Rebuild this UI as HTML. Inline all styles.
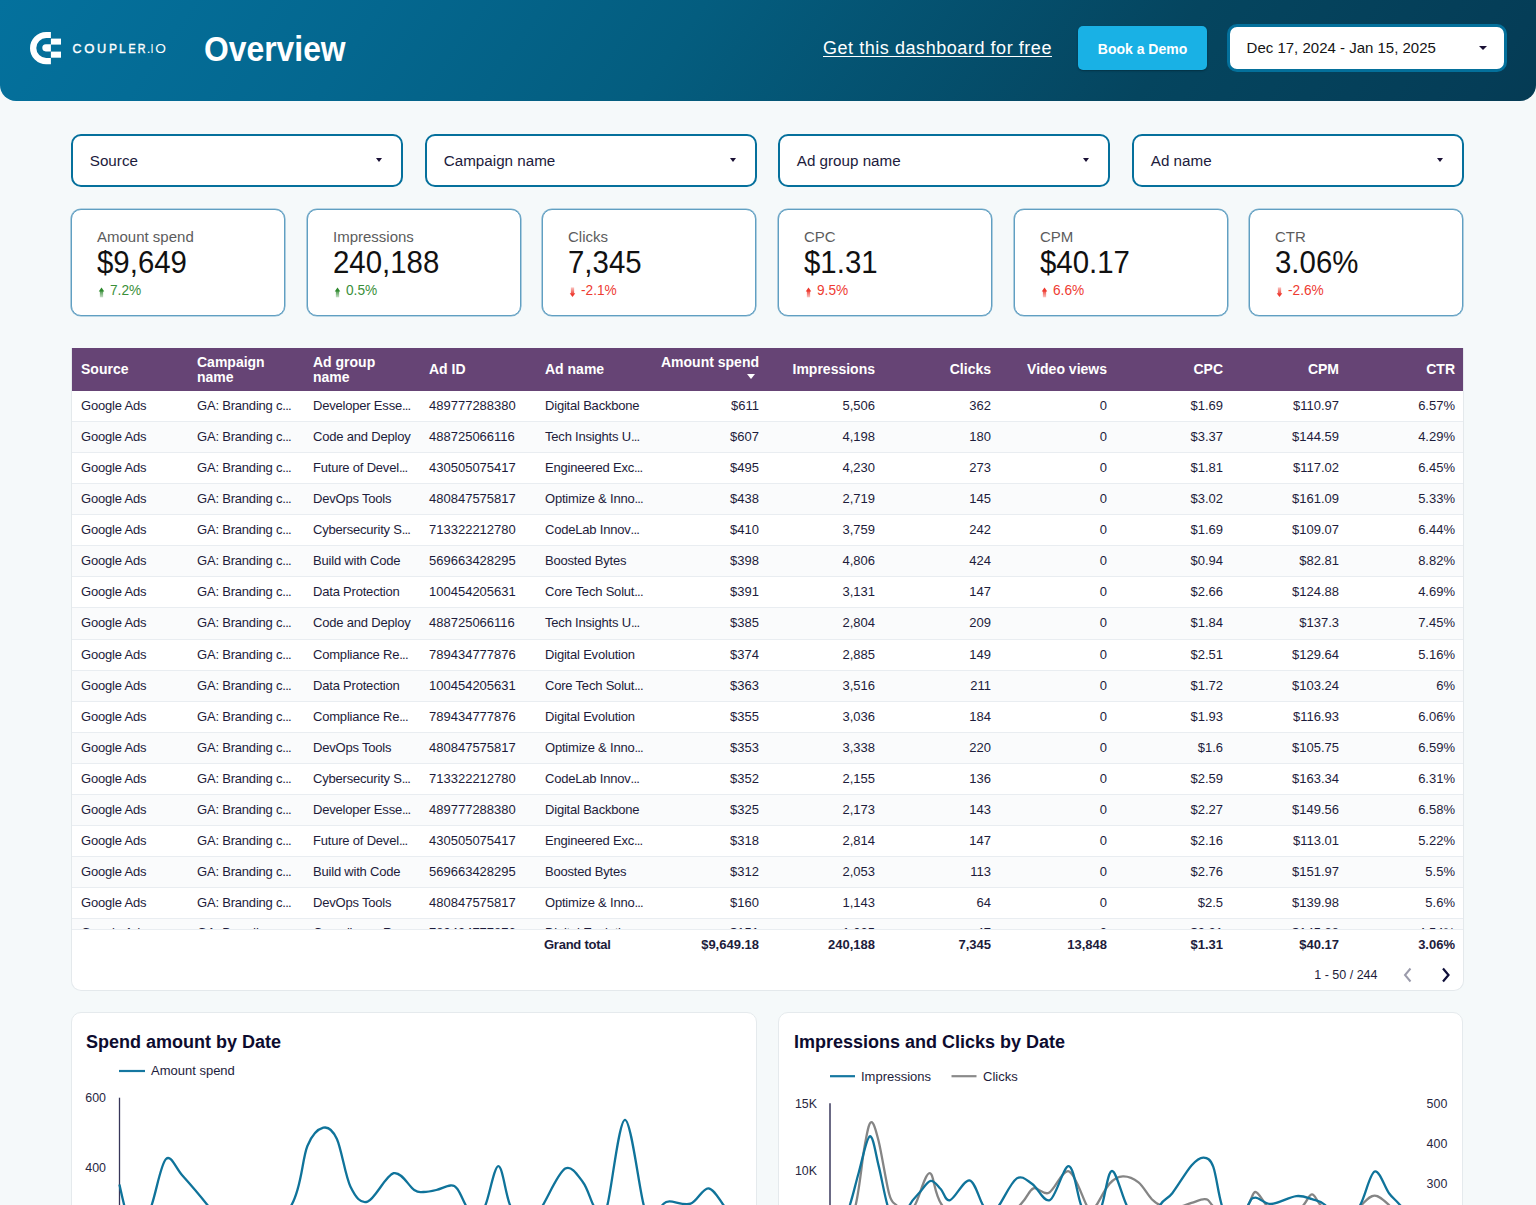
<!DOCTYPE html>
<html><head><meta charset="utf-8">
<style>
*{box-sizing:border-box;margin:0;padding:0}
html,body{width:1536px;height:1205px;overflow:hidden;background:#f5f9fa;font-family:"Liberation Sans",sans-serif}
.abs{position:absolute}
#hdr{position:absolute;left:0;top:0;width:1536px;height:101px;border-radius:0 0 16px 16px;background:linear-gradient(125deg,#04719d 0%,#04678f 24%,#045d7f 44%,#05455f 75%,#053d57 96%,#053b54 100%)}
.overview{position:absolute;left:204px;top:28.5px;color:#fff;font-size:34.5px;line-height:40px;font-weight:bold;transform:scaleX(0.923);transform-origin:0 0;white-space:nowrap}
.getlink{position:absolute;left:823px;top:37px;color:#fff;font-size:18px;line-height:22px;letter-spacing:0.55px;text-decoration:underline;text-underline-offset:2px;white-space:nowrap}
.demo{position:absolute;left:1078px;top:26px;width:129px;height:44px;border-radius:5px;background:#19b1e5;color:#fff;font-weight:bold;font-size:14px;text-align:center;line-height:47px;box-shadow:0 1px 2px rgba(0,0,0,.3)}
.date{position:absolute;left:1227px;top:24px;width:280px;height:48px;border-radius:10px;background:#fff;border:3px solid #04709b}
.date span{position:absolute;left:16.6px;top:12.4px;font-size:15px;line-height:17px;color:#141414;white-space:nowrap}
.tri{position:absolute;width:0;height:0;border-left:3.8px solid transparent;border-right:3.8px solid transparent;border-top:4.2px solid #1a1035}
.filter{position:absolute;top:134px;width:332px;height:53px;border:2.3px solid #05709c;border-radius:10px;background:#fff}
.filter span{position:absolute;left:16.8px;top:16px;font-size:15.2px;color:#1c1b3c}
.filter .tri{left:303px;top:22px}
.kpi{position:absolute;top:209px;width:214px;height:107px;border:1px solid #609fc2;box-shadow:0 0 0 0.6px #7fb1cd;border-radius:10px;background:#fff}
.kpi .l{position:absolute;left:25px;top:18px;font-size:15px;color:#5c5c5c}
.kpi .ar{position:absolute;left:26.3px;top:76.7px;transform:scaleX(0.9)}
.kpi .v{position:absolute;left:24.6px;top:34.3px;font-size:31.8px;color:#111;transform:scaleX(0.925);transform-origin:0 0;white-space:nowrap}
.kpi .d{position:absolute;left:38.4px;top:71.6px;font-size:14.9px;transform:scaleX(0.92);transform-origin:0 0;white-space:nowrap}
.up{color:#3a8f3a}.dn{color:#ee3b32}

#tbl{position:absolute;left:71px;top:348px;width:1393px;height:643px;background:#fff;border:1px solid #e4e9ec;border-top:none;border-radius:0 0 10px 10px;overflow:hidden;color:#1d1c3b}
#tbl .th{position:absolute;left:0;top:0;width:1391px;height:43px;background:#664475;color:#fff;font-weight:bold;font-size:14px}
#tbl .c{position:absolute;width:116px;padding:0 9px;white-space:nowrap}
#tbl .l{text-align:left}#tbl .r{text-align:right}
#tbl .th .c{top:12.7px;line-height:16px}
#tbl .th .two{top:6.8px;line-height:15.5px}
.stri{display:inline-block;width:0;height:0;border-left:4px solid transparent;border-right:4px solid transparent;border-top:5px solid #fff;margin-right:4px;vertical-align:3px}
#tbl .body{position:absolute;left:0;top:43px;width:1391px;height:537.8px;overflow:hidden;font-size:13px}
#tbl .row{position:absolute;left:0;width:1391px;height:31.07px;border-bottom:1px solid #e9edf1}
#tbl .row.alt{background:#fafbfc}
#tbl .row .c{top:0;line-height:30px}
#tbl .row.last .c{top:-0.8px}
#tbl .tot{position:absolute;left:0;top:580.8px;width:1391px;height:30px;font-size:13px;font-weight:bold;border-top:1px solid #e9edf1}
#tbl .tot .c{top:0px;line-height:30px}
#tbl .pag{position:absolute;left:1205px;top:618.5px;width:100.5px;text-align:right;font-size:12.5px;line-height:16px}

.card{position:absolute;top:1012px;height:260px;background:#fff;border:1px solid #e5eaed;border-radius:10px}
.ctitle{position:absolute;top:1031.75px;font-size:18px;font-weight:bold;line-height:20px;color:#0d0c2f;white-space:nowrap}
.leg{position:absolute;font-size:13px;line-height:16px;color:#1d1c3b;white-space:nowrap}
.ax{position:absolute;margin-top:0.4px;width:31px;font-size:12.4px;line-height:16px;color:#28273f;text-align:right;white-space:nowrap}
.ax.r{text-align:left;left:1426.6px!important;margin-top:0.8px}

#tbl i{font-style:normal;letter-spacing:-0.8px}
#tbl .row .t{letter-spacing:-0.2px}
</style></head>
<body>
<div id="hdr">
  <svg class="abs" style="left:0;top:0" width="70" height="80" viewBox="0 0 70 80"><path fill="#fff" fill-rule="evenodd" d="M50.9,32 H46.15 A16.15,16.15 0 0 0 46.15,64.3 H50.9 Z M50.9,38.1 H46.2 A9.9,9.9 0 0 0 46.2,57.9 H50.9 Z M50.9,44.3 H45.85 A3.55,3.55 0 0 0 45.85,51.4 H50.9 Z"/><rect x="50.9" y="38.6" width="10.1" height="6" fill="#fff"/><rect x="50.9" y="51.6" width="10.1" height="6.1" fill="#fff"/></svg>
  <svg class="abs" style="left:0;top:0" width="180" height="80" viewBox="0 0 180 80"><g font-family="Liberation Sans" font-size="13.4" fill="#fff"><text transform="translate(72.43,53) scale(0.93,1)" stroke="#fff" stroke-width="0.4">C</text><text transform="translate(84.3,53) scale(0.98,1)" stroke="#fff" stroke-width="0.4">O</text><text transform="translate(97.12,53) scale(0.95,1)" stroke="#fff" stroke-width="0.4">U</text><text transform="translate(108.98,53) scale(0.9,1)" stroke="#fff" stroke-width="0.4">P</text><text transform="translate(119.12,53) scale(0.9,1)" stroke="#fff" stroke-width="0.4">L</text><text transform="translate(128.4,53) scale(0.8,1)" stroke="#fff" stroke-width="0.4">E</text><text transform="translate(137.86,53) scale(0.8,1)" stroke="#fff" stroke-width="0.4">R</text><text transform="translate(146.67,53) scale(1,1)">.</text><text transform="translate(150.38,53) scale(0.8,1)">I</text><text transform="translate(155.36,53) scale(1.02,1)">O</text></g></svg>
  <div class="overview">Overview</div>
  <div class="getlink">Get this dashboard for free</div>
  <div class="demo">Book a Demo</div>
  <div class="date"><span>Dec 17, 2024 - Jan 15, 2025</span><div class="tri" style="left:249px;top:19.3px;border-left-width:4px;border-right-width:4px;border-top-width:4.5px"></div></div>
</div>

<div class="filter" style="left:71px"><span>Source</span><div class="tri"></div></div>
<div class="filter" style="left:425px"><span>Campaign name</span><div class="tri"></div></div>
<div class="filter" style="left:778px"><span>Ad group name</span><div class="tri"></div></div>
<div class="filter" style="left:1132px"><span>Ad name</span><div class="tri"></div></div>

<div class="kpi" style="left:71px"><div class="l">Amount spend</div><div class="v">$9,649</div><svg class="ar" width="7" height="11" viewBox="0 0 7 11"><defs><linearGradient id="gu" x1="0" y1="0" x2="0" y2="1"><stop offset="0" stop-color="#3a8f3a" stop-opacity="0.9"/><stop offset="1" stop-color="#3a8f3a" stop-opacity="0.3"/></linearGradient></defs><path d="M0.4,4.4 L3.5,0.6 L6.6,4.4 Z" fill="#2f8a2f"/><rect x="1.7" y="4" width="3.6" height="6.3" fill="url(#gu)"/></svg><div class="d up">7.2%</div></div>
<div class="kpi" style="left:307px"><div class="l">Impressions</div><div class="v">240,188</div><svg class="ar" width="7" height="11" viewBox="0 0 7 11"><defs><linearGradient id="gu2" x1="0" y1="0" x2="0" y2="1"><stop offset="0" stop-color="#3a8f3a" stop-opacity="0.9"/><stop offset="1" stop-color="#3a8f3a" stop-opacity="0.3"/></linearGradient></defs><path d="M0.4,4.4 L3.5,0.6 L6.6,4.4 Z" fill="#2f8a2f"/><rect x="1.7" y="4" width="3.6" height="6.3" fill="url(#gu2)"/></svg><div class="d up">0.5%</div></div>
<div class="kpi" style="left:542px"><div class="l">Clicks</div><div class="v">7,345</div><svg class="ar" width="7" height="11" viewBox="0 0 7 11"><defs><linearGradient id="rd" x1="0" y1="1" x2="0" y2="0"><stop offset="0" stop-color="#ee3a30" stop-opacity="0.9"/><stop offset="1" stop-color="#ee3a30" stop-opacity="0.3"/></linearGradient></defs><path d="M0.4,6.3 L3.5,10.1 L6.6,6.3 Z" fill="#ee3a30"/><rect x="1.7" y="0.4" width="3.6" height="6.3" fill="url(#rd)"/></svg><div class="d dn">-2.1%</div></div>
<div class="kpi" style="left:778px"><div class="l">CPC</div><div class="v">$1.31</div><svg class="ar" width="7" height="11" viewBox="0 0 7 11"><defs><linearGradient id="ru" x1="0" y1="0" x2="0" y2="1"><stop offset="0" stop-color="#ee3a30" stop-opacity="0.9"/><stop offset="1" stop-color="#ee3a30" stop-opacity="0.3"/></linearGradient></defs><path d="M0.4,4.4 L3.5,0.6 L6.6,4.4 Z" fill="#ee3a30"/><rect x="1.7" y="4" width="3.6" height="6.3" fill="url(#ru)"/></svg><div class="d dn">9.5%</div></div>
<div class="kpi" style="left:1014px"><div class="l">CPM</div><div class="v">$40.17</div><svg class="ar" width="7" height="11" viewBox="0 0 7 11"><defs><linearGradient id="ru2" x1="0" y1="0" x2="0" y2="1"><stop offset="0" stop-color="#ee3a30" stop-opacity="0.9"/><stop offset="1" stop-color="#ee3a30" stop-opacity="0.3"/></linearGradient></defs><path d="M0.4,4.4 L3.5,0.6 L6.6,4.4 Z" fill="#ee3a30"/><rect x="1.7" y="4" width="3.6" height="6.3" fill="url(#ru2)"/></svg><div class="d dn">6.6%</div></div>
<div class="kpi" style="left:1249px"><div class="l">CTR</div><div class="v">3.06%</div><svg class="ar" width="7" height="11" viewBox="0 0 7 11"><defs><linearGradient id="rd2" x1="0" y1="1" x2="0" y2="0"><stop offset="0" stop-color="#ee3a30" stop-opacity="0.9"/><stop offset="1" stop-color="#ee3a30" stop-opacity="0.3"/></linearGradient></defs><path d="M0.4,6.3 L3.5,10.1 L6.6,6.3 Z" fill="#ee3a30"/><rect x="1.7" y="0.4" width="3.6" height="6.3" fill="url(#rd2)"/></svg><div class="d dn">-2.6%</div></div>

<div id="tbl">
<div class="th"><div class="c l" style="left:0">Source</div><div class="c l two" style="left:116px">Campaign<br>name</div><div class="c l two" style="left:232px">Ad group<br>name</div><div class="c l" style="left:348px">Ad ID</div><div class="c l" style="left:464px">Ad name</div><div class="c r two" style="left:580px">Amount spend<br><span class="stri"></span></div><div class="c r" style="left:696px">Impressions</div><div class="c r" style="left:812px">Clicks</div><div class="c r" style="left:928px">Video views</div><div class="c r" style="left:1044px">CPC</div><div class="c r" style="left:1160px">CPM</div><div class="c r" style="left:1276px">CTR</div></div>
<div class="body">
<div class="row" style="top:0.0px"><div class="c l t" style="left:0px">Google Ads</div><div class="c l t" style="left:116px">GA: Branding c<i>...</i></div><div class="c l t" style="left:232px">Developer Esse<i>...</i></div><div class="c l" style="left:348px">489777288380</div><div class="c l t" style="left:464px">Digital Backbone</div><div class="c r" style="left:580px">$611</div><div class="c r" style="left:696px">5,506</div><div class="c r" style="left:812px">362</div><div class="c r" style="left:928px">0</div><div class="c r" style="left:1044px">$1.69</div><div class="c r" style="left:1160px">$110.97</div><div class="c r" style="left:1276px">6.57%</div></div>
<div class="row alt" style="top:31.07px"><div class="c l t" style="left:0px">Google Ads</div><div class="c l t" style="left:116px">GA: Branding c<i>...</i></div><div class="c l t" style="left:232px">Code and Deploy</div><div class="c l" style="left:348px">488725066116</div><div class="c l t" style="left:464px">Tech Insights U<i>...</i></div><div class="c r" style="left:580px">$607</div><div class="c r" style="left:696px">4,198</div><div class="c r" style="left:812px">180</div><div class="c r" style="left:928px">0</div><div class="c r" style="left:1044px">$3.37</div><div class="c r" style="left:1160px">$144.59</div><div class="c r" style="left:1276px">4.29%</div></div>
<div class="row" style="top:62.14px"><div class="c l t" style="left:0px">Google Ads</div><div class="c l t" style="left:116px">GA: Branding c<i>...</i></div><div class="c l t" style="left:232px">Future of Devel<i>...</i></div><div class="c l" style="left:348px">430505075417</div><div class="c l t" style="left:464px">Engineered Exc<i>...</i></div><div class="c r" style="left:580px">$495</div><div class="c r" style="left:696px">4,230</div><div class="c r" style="left:812px">273</div><div class="c r" style="left:928px">0</div><div class="c r" style="left:1044px">$1.81</div><div class="c r" style="left:1160px">$117.02</div><div class="c r" style="left:1276px">6.45%</div></div>
<div class="row alt" style="top:93.21px"><div class="c l t" style="left:0px">Google Ads</div><div class="c l t" style="left:116px">GA: Branding c<i>...</i></div><div class="c l t" style="left:232px">DevOps Tools</div><div class="c l" style="left:348px">480847575817</div><div class="c l t" style="left:464px">Optimize &amp; Inno<i>...</i></div><div class="c r" style="left:580px">$438</div><div class="c r" style="left:696px">2,719</div><div class="c r" style="left:812px">145</div><div class="c r" style="left:928px">0</div><div class="c r" style="left:1044px">$3.02</div><div class="c r" style="left:1160px">$161.09</div><div class="c r" style="left:1276px">5.33%</div></div>
<div class="row" style="top:124.28px"><div class="c l t" style="left:0px">Google Ads</div><div class="c l t" style="left:116px">GA: Branding c<i>...</i></div><div class="c l t" style="left:232px">Cybersecurity S<i>...</i></div><div class="c l" style="left:348px">713322212780</div><div class="c l t" style="left:464px">CodeLab Innov<i>...</i></div><div class="c r" style="left:580px">$410</div><div class="c r" style="left:696px">3,759</div><div class="c r" style="left:812px">242</div><div class="c r" style="left:928px">0</div><div class="c r" style="left:1044px">$1.69</div><div class="c r" style="left:1160px">$109.07</div><div class="c r" style="left:1276px">6.44%</div></div>
<div class="row alt" style="top:155.35px"><div class="c l t" style="left:0px">Google Ads</div><div class="c l t" style="left:116px">GA: Branding c<i>...</i></div><div class="c l t" style="left:232px">Build with Code</div><div class="c l" style="left:348px">569663428295</div><div class="c l t" style="left:464px">Boosted Bytes</div><div class="c r" style="left:580px">$398</div><div class="c r" style="left:696px">4,806</div><div class="c r" style="left:812px">424</div><div class="c r" style="left:928px">0</div><div class="c r" style="left:1044px">$0.94</div><div class="c r" style="left:1160px">$82.81</div><div class="c r" style="left:1276px">8.82%</div></div>
<div class="row" style="top:186.42px"><div class="c l t" style="left:0px">Google Ads</div><div class="c l t" style="left:116px">GA: Branding c<i>...</i></div><div class="c l t" style="left:232px">Data Protection</div><div class="c l" style="left:348px">100454205631</div><div class="c l t" style="left:464px">Core Tech Solut<i>...</i></div><div class="c r" style="left:580px">$391</div><div class="c r" style="left:696px">3,131</div><div class="c r" style="left:812px">147</div><div class="c r" style="left:928px">0</div><div class="c r" style="left:1044px">$2.66</div><div class="c r" style="left:1160px">$124.88</div><div class="c r" style="left:1276px">4.69%</div></div>
<div class="row alt" style="top:217.49px"><div class="c l t" style="left:0px">Google Ads</div><div class="c l t" style="left:116px">GA: Branding c<i>...</i></div><div class="c l t" style="left:232px">Code and Deploy</div><div class="c l" style="left:348px">488725066116</div><div class="c l t" style="left:464px">Tech Insights U<i>...</i></div><div class="c r" style="left:580px">$385</div><div class="c r" style="left:696px">2,804</div><div class="c r" style="left:812px">209</div><div class="c r" style="left:928px">0</div><div class="c r" style="left:1044px">$1.84</div><div class="c r" style="left:1160px">$137.3</div><div class="c r" style="left:1276px">7.45%</div></div>
<div class="row" style="top:248.56px"><div class="c l t" style="left:0px">Google Ads</div><div class="c l t" style="left:116px">GA: Branding c<i>...</i></div><div class="c l t" style="left:232px">Compliance Re<i>...</i></div><div class="c l" style="left:348px">789434777876</div><div class="c l t" style="left:464px">Digital Evolution</div><div class="c r" style="left:580px">$374</div><div class="c r" style="left:696px">2,885</div><div class="c r" style="left:812px">149</div><div class="c r" style="left:928px">0</div><div class="c r" style="left:1044px">$2.51</div><div class="c r" style="left:1160px">$129.64</div><div class="c r" style="left:1276px">5.16%</div></div>
<div class="row alt" style="top:279.63px"><div class="c l t" style="left:0px">Google Ads</div><div class="c l t" style="left:116px">GA: Branding c<i>...</i></div><div class="c l t" style="left:232px">Data Protection</div><div class="c l" style="left:348px">100454205631</div><div class="c l t" style="left:464px">Core Tech Solut<i>...</i></div><div class="c r" style="left:580px">$363</div><div class="c r" style="left:696px">3,516</div><div class="c r" style="left:812px">211</div><div class="c r" style="left:928px">0</div><div class="c r" style="left:1044px">$1.72</div><div class="c r" style="left:1160px">$103.24</div><div class="c r" style="left:1276px">6%</div></div>
<div class="row" style="top:310.7px"><div class="c l t" style="left:0px">Google Ads</div><div class="c l t" style="left:116px">GA: Branding c<i>...</i></div><div class="c l t" style="left:232px">Compliance Re<i>...</i></div><div class="c l" style="left:348px">789434777876</div><div class="c l t" style="left:464px">Digital Evolution</div><div class="c r" style="left:580px">$355</div><div class="c r" style="left:696px">3,036</div><div class="c r" style="left:812px">184</div><div class="c r" style="left:928px">0</div><div class="c r" style="left:1044px">$1.93</div><div class="c r" style="left:1160px">$116.93</div><div class="c r" style="left:1276px">6.06%</div></div>
<div class="row alt" style="top:341.77px"><div class="c l t" style="left:0px">Google Ads</div><div class="c l t" style="left:116px">GA: Branding c<i>...</i></div><div class="c l t" style="left:232px">DevOps Tools</div><div class="c l" style="left:348px">480847575817</div><div class="c l t" style="left:464px">Optimize &amp; Inno<i>...</i></div><div class="c r" style="left:580px">$353</div><div class="c r" style="left:696px">3,338</div><div class="c r" style="left:812px">220</div><div class="c r" style="left:928px">0</div><div class="c r" style="left:1044px">$1.6</div><div class="c r" style="left:1160px">$105.75</div><div class="c r" style="left:1276px">6.59%</div></div>
<div class="row" style="top:372.84px"><div class="c l t" style="left:0px">Google Ads</div><div class="c l t" style="left:116px">GA: Branding c<i>...</i></div><div class="c l t" style="left:232px">Cybersecurity S<i>...</i></div><div class="c l" style="left:348px">713322212780</div><div class="c l t" style="left:464px">CodeLab Innov<i>...</i></div><div class="c r" style="left:580px">$352</div><div class="c r" style="left:696px">2,155</div><div class="c r" style="left:812px">136</div><div class="c r" style="left:928px">0</div><div class="c r" style="left:1044px">$2.59</div><div class="c r" style="left:1160px">$163.34</div><div class="c r" style="left:1276px">6.31%</div></div>
<div class="row alt" style="top:403.91px"><div class="c l t" style="left:0px">Google Ads</div><div class="c l t" style="left:116px">GA: Branding c<i>...</i></div><div class="c l t" style="left:232px">Developer Esse<i>...</i></div><div class="c l" style="left:348px">489777288380</div><div class="c l t" style="left:464px">Digital Backbone</div><div class="c r" style="left:580px">$325</div><div class="c r" style="left:696px">2,173</div><div class="c r" style="left:812px">143</div><div class="c r" style="left:928px">0</div><div class="c r" style="left:1044px">$2.27</div><div class="c r" style="left:1160px">$149.56</div><div class="c r" style="left:1276px">6.58%</div></div>
<div class="row" style="top:434.98px"><div class="c l t" style="left:0px">Google Ads</div><div class="c l t" style="left:116px">GA: Branding c<i>...</i></div><div class="c l t" style="left:232px">Future of Devel<i>...</i></div><div class="c l" style="left:348px">430505075417</div><div class="c l t" style="left:464px">Engineered Exc<i>...</i></div><div class="c r" style="left:580px">$318</div><div class="c r" style="left:696px">2,814</div><div class="c r" style="left:812px">147</div><div class="c r" style="left:928px">0</div><div class="c r" style="left:1044px">$2.16</div><div class="c r" style="left:1160px">$113.01</div><div class="c r" style="left:1276px">5.22%</div></div>
<div class="row alt" style="top:466.05px"><div class="c l t" style="left:0px">Google Ads</div><div class="c l t" style="left:116px">GA: Branding c<i>...</i></div><div class="c l t" style="left:232px">Build with Code</div><div class="c l" style="left:348px">569663428295</div><div class="c l t" style="left:464px">Boosted Bytes</div><div class="c r" style="left:580px">$312</div><div class="c r" style="left:696px">2,053</div><div class="c r" style="left:812px">113</div><div class="c r" style="left:928px">0</div><div class="c r" style="left:1044px">$2.76</div><div class="c r" style="left:1160px">$151.97</div><div class="c r" style="left:1276px">5.5%</div></div>
<div class="row" style="top:497.12px"><div class="c l t" style="left:0px">Google Ads</div><div class="c l t" style="left:116px">GA: Branding c<i>...</i></div><div class="c l t" style="left:232px">DevOps Tools</div><div class="c l" style="left:348px">480847575817</div><div class="c l t" style="left:464px">Optimize &amp; Inno<i>...</i></div><div class="c r" style="left:580px">$160</div><div class="c r" style="left:696px">1,143</div><div class="c r" style="left:812px">64</div><div class="c r" style="left:928px">0</div><div class="c r" style="left:1044px">$2.5</div><div class="c r" style="left:1160px">$139.98</div><div class="c r" style="left:1276px">5.6%</div></div>
<div class="row alt last" style="top:528.19px"><div class="c l t" style="left:0px">Google Ads</div><div class="c l t" style="left:116px">GA: Branding c<i>...</i></div><div class="c l t" style="left:232px">Compliance Re<i>...</i></div><div class="c l" style="left:348px">789434777876</div><div class="c l t" style="left:464px">Digital Evolution</div><div class="c r" style="left:580px">$151</div><div class="c r" style="left:696px">1,035</div><div class="c r" style="left:812px">47</div><div class="c r" style="left:928px">0</div><div class="c r" style="left:1044px">$3.21</div><div class="c r" style="left:1160px">$145.88</div><div class="c r" style="left:1276px">4.54%</div></div>
</div>
<div class="tot"><div class="c l" style="left:463px;letter-spacing:-0.25px">Grand total</div><div class="c r" style="left:580px">$9,649.18</div><div class="c r" style="left:696px">240,188</div><div class="c r" style="left:812px">7,345</div><div class="c r" style="left:928px">13,848</div><div class="c r" style="left:1044px">$1.31</div><div class="c r" style="left:1160px">$40.17</div><div class="c r" style="left:1276px">3.06%</div></div>
<div class="pag">1 - 50 / 244</div>
<svg class="abs" style="left:1331px;top:619px" width="10" height="16" viewBox="0 0 10 16"><path d="M7.5 1.5 L2 8 L7.5 14.5" fill="none" stroke="#9b9bab" stroke-width="2"/></svg>
<svg class="abs" style="left:1369px;top:619px" width="10" height="16" viewBox="0 0 10 16"><path d="M2 1.5 L7.5 8 L2 14.5" fill="none" stroke="#0f0f3a" stroke-width="2.2"/></svg>
</div>
<div class="card" style="left:71px;width:686px"></div>
<div class="card" style="left:778px;width:685px"></div>
<div class="ctitle" style="left:86px">Spend amount by Date</div>
<div class="ctitle" style="left:794px">Impressions and Clicks by Date</div>
<div class="leg" style="left:151px;top:1063px">Amount spend</div>
<div class="leg" style="left:861px;top:1068.7px">Impressions</div>
<div class="leg" style="left:983px;top:1068.7px">Clicks</div>
<div class="ax" style="left:75px;top:1090px">600</div>
<div class="ax" style="left:75px;top:1159.5px">400</div>
<div class="ax" style="left:786px;top:1095.5px">15K</div>
<div class="ax" style="left:786px;top:1162.3px">10K</div>
<div class="ax r" style="left:1400px;top:1095.3px">500</div>
<div class="ax r" style="left:1400px;top:1135.5px">400</div>
<div class="ax r" style="left:1400px;top:1175.3px">300</div>
<svg class="abs" style="left:0;top:0" width="1536" height="1205" viewBox="0 0 1536 1205">
<line x1="119" y1="1071" x2="145" y2="1071" stroke="#1577a0" stroke-width="2.2"/>
<line x1="830" y1="1076.2" x2="855" y2="1076.2" stroke="#1577a0" stroke-width="2.2"/>
<line x1="951.5" y1="1076.2" x2="976.5" y2="1076.2" stroke="#8a8a8a" stroke-width="2.2"/>
<line x1="119.5" y1="1097.7" x2="119.5" y2="1210" stroke="#37365a" stroke-width="1.3"/>
<line x1="830" y1="1103.3" x2="830" y2="1210" stroke="#6b6a85" stroke-width="2"/>
<path d="M119.4,1184.5 C120.5,1189.1 123.1,1201.9 126.0,1212.0 C128.9,1222.1 132.7,1246.2 137.0,1245.0 C141.3,1243.8 146.9,1219.3 151.7,1205.0 C156.5,1190.7 160.9,1163.9 166.0,1159.0 C171.1,1154.1 175.5,1167.8 182.4,1175.5 C189.3,1183.2 197.0,1191.8 207.4,1205.0 C217.8,1218.2 231.0,1255.0 245.0,1255.0 C259.0,1255.0 281.1,1223.2 291.5,1205.0 C301.9,1186.8 302.1,1158.9 307.4,1146.0 C312.7,1133.1 318.4,1128.9 323.3,1127.7 C328.2,1126.5 332.4,1129.2 336.9,1139.0 C341.4,1148.8 345.4,1176.4 350.5,1186.8 C355.6,1197.2 360.4,1203.9 367.6,1201.6 C374.8,1199.3 385.9,1175.1 393.7,1173.2 C401.5,1171.3 409.2,1186.9 414.2,1190.0 C419.1,1193.1 419.7,1192.0 423.4,1192.0 C427.1,1192.0 431.8,1191.1 436.3,1190.0 C440.8,1188.9 446.9,1185.7 450.4,1185.5 C453.9,1185.3 454.9,1185.8 457.4,1189.0 C459.9,1192.2 462.7,1199.5 465.6,1205.0 C468.5,1210.5 471.7,1222.0 475.0,1222.0 C478.3,1222.0 481.6,1214.3 485.5,1205.0 C489.4,1195.7 494.3,1166.2 498.4,1166.2 C502.5,1166.2 505.4,1193.5 510.0,1205.0 C514.6,1216.5 520.5,1235.0 526.0,1235.0 C531.5,1235.0 536.5,1216.1 543.0,1205.0 C549.5,1193.9 558.6,1172.4 565.2,1168.6 C571.8,1164.8 578.1,1175.9 582.8,1182.0 C587.5,1188.1 590.4,1199.7 593.3,1205.0 C596.2,1210.3 597.6,1214.0 600.0,1214.0 C602.4,1214.0 603.2,1220.7 607.4,1205.0 C611.6,1189.3 619.0,1119.8 625.0,1119.8 C631.0,1119.8 639.2,1188.6 643.7,1205.0 C648.2,1221.4 648.9,1218.0 652.0,1218.0 C655.1,1218.0 659.6,1207.8 662.5,1205.0 C665.4,1202.2 664.8,1201.6 669.5,1201.4 C674.2,1201.2 684.1,1205.9 690.6,1203.7 C697.1,1201.5 702.7,1188.1 708.2,1188.3 C713.7,1188.5 718.9,1198.9 723.4,1205.0 C727.9,1211.1 733.1,1221.7 735.0,1225.0" fill="none" stroke="#0f739a" stroke-width="2.3"/>
<path d="M840.0,1250.0 C842.6,1242.5 851.6,1222.2 855.7,1205.0 C859.8,1187.8 862.0,1160.7 864.5,1146.9 C867.0,1133.1 868.6,1123.3 871.0,1122.3 C873.4,1121.3 875.6,1129.1 878.6,1141.0 C881.6,1152.9 886.2,1183.1 889.1,1193.8 C892.0,1204.5 893.6,1202.0 896.2,1205.0 C898.9,1208.0 901.9,1212.0 905.0,1212.0 C908.1,1212.0 910.8,1211.5 914.9,1205.0 C919.0,1198.5 925.1,1173.2 929.6,1173.2 C934.1,1173.2 933.5,1193.0 941.9,1205.0 C950.3,1217.0 967.0,1245.0 980.0,1245.0 C993.0,1245.0 1011.2,1214.4 1020.1,1205.0 C1029.0,1195.6 1028.6,1190.4 1033.4,1188.4 C1038.2,1186.4 1043.0,1195.7 1048.9,1192.8 C1054.8,1189.9 1062.5,1169.3 1068.8,1171.3 C1075.1,1173.3 1082.8,1198.5 1086.5,1205.0 C1090.2,1211.5 1089.3,1210.0 1091.0,1210.0 C1092.7,1210.0 1093.4,1209.4 1096.5,1205.0 C1099.6,1200.6 1105.2,1188.4 1109.6,1183.6 C1114.0,1178.8 1118.1,1176.6 1122.9,1176.4 C1127.7,1176.2 1133.7,1178.6 1138.5,1182.4 C1143.3,1186.2 1147.9,1195.3 1151.8,1199.2 C1155.7,1203.1 1158.1,1204.5 1162.0,1206.0 C1165.9,1207.5 1170.1,1208.5 1175.0,1208.0 C1179.9,1207.5 1186.5,1204.4 1191.5,1202.9 C1196.5,1201.4 1201.4,1198.9 1204.8,1199.2 C1208.2,1199.5 1207.8,1199.5 1212.0,1205.0 C1216.2,1210.5 1224.0,1232.0 1230.0,1232.0 C1236.0,1232.0 1244.0,1211.7 1248.2,1205.0 C1252.4,1198.3 1252.4,1192.0 1255.4,1192.0 C1258.4,1192.0 1261.3,1199.0 1266.2,1205.0 C1271.1,1211.0 1278.8,1228.0 1285.0,1228.0 C1291.2,1228.0 1299.1,1210.6 1303.6,1205.0 C1308.1,1199.4 1309.2,1194.4 1312.0,1194.4 C1314.8,1194.4 1315.7,1199.1 1320.4,1205.0 C1325.1,1210.9 1333.2,1230.0 1340.0,1230.0 C1346.8,1230.0 1355.6,1210.7 1361.4,1205.0 C1367.2,1199.3 1370.0,1195.6 1374.6,1195.6 C1379.2,1195.6 1383.1,1199.6 1389.0,1205.0 C1394.9,1210.4 1406.5,1224.2 1410.0,1228.0" fill="none" stroke="#858585" stroke-width="2.3"/>
<path d="M835.0,1250.0 C837.5,1242.5 845.9,1217.9 849.9,1205.0 C853.9,1192.1 855.4,1184.2 858.7,1172.7 C862.0,1161.2 866.5,1137.5 869.8,1136.3 C873.1,1135.1 875.7,1154.1 878.6,1165.6 C881.5,1177.0 884.2,1193.9 887.4,1205.0 C890.6,1216.1 894.3,1232.0 898.0,1232.0 C901.7,1232.0 906.1,1211.6 909.7,1205.0 C913.3,1198.4 916.1,1196.6 919.6,1192.6 C923.1,1188.6 927.2,1181.5 930.7,1180.9 C934.2,1180.3 937.5,1185.8 940.7,1189.0 C943.9,1192.2 945.2,1201.7 950.0,1200.2 C954.8,1198.8 963.9,1179.5 969.4,1180.3 C974.9,1181.1 979.3,1199.2 982.9,1205.0 C986.5,1210.8 988.3,1215.0 991.0,1215.0 C993.7,1215.0 995.0,1211.1 999.3,1205.0 C1003.6,1198.9 1011.3,1181.9 1016.8,1178.4 C1022.3,1174.9 1026.8,1180.4 1032.3,1184.0 C1037.8,1187.6 1043.9,1203.0 1050.0,1200.0 C1056.1,1197.0 1063.6,1165.4 1068.8,1166.2 C1074.0,1167.0 1077.1,1194.4 1081.0,1205.0 C1084.9,1215.6 1088.5,1230.0 1092.0,1230.0 C1095.5,1230.0 1098.7,1214.8 1102.0,1205.0 C1105.3,1195.2 1107.9,1171.0 1112.0,1171.0 C1116.1,1171.0 1121.3,1193.8 1126.5,1205.0 C1131.7,1216.2 1137.4,1238.0 1143.0,1238.0 C1148.6,1238.0 1155.3,1212.5 1160.2,1205.0 C1165.1,1197.5 1167.1,1199.8 1172.3,1193.2 C1177.5,1186.6 1186.3,1171.4 1191.5,1165.5 C1196.7,1159.6 1200.0,1157.4 1203.6,1157.6 C1207.2,1157.8 1210.2,1158.8 1213.2,1166.7 C1216.2,1174.6 1218.1,1193.1 1221.7,1205.0 C1225.3,1216.9 1230.6,1238.0 1235.0,1238.0 C1239.4,1238.0 1244.8,1211.7 1248.2,1205.0 C1251.6,1198.3 1251.6,1197.8 1255.4,1197.6 C1259.2,1197.4 1264.2,1204.2 1271.0,1204.0 C1277.8,1203.8 1289.5,1196.9 1296.3,1196.1 C1303.1,1195.3 1307.2,1197.7 1312.0,1199.2 C1316.8,1200.7 1320.0,1200.2 1325.2,1205.0 C1330.4,1209.8 1337.2,1228.0 1343.0,1228.0 C1348.8,1228.0 1354.9,1214.4 1360.2,1205.0 C1365.5,1195.6 1369.8,1173.5 1374.6,1171.5 C1379.4,1169.5 1384.8,1187.6 1389.0,1193.2 C1393.2,1198.8 1394.8,1198.9 1400.0,1205.0 C1405.2,1211.1 1416.7,1225.8 1420.0,1230.0" fill="none" stroke="#0f739a" stroke-width="2.3"/>
</svg>
</body></html>
